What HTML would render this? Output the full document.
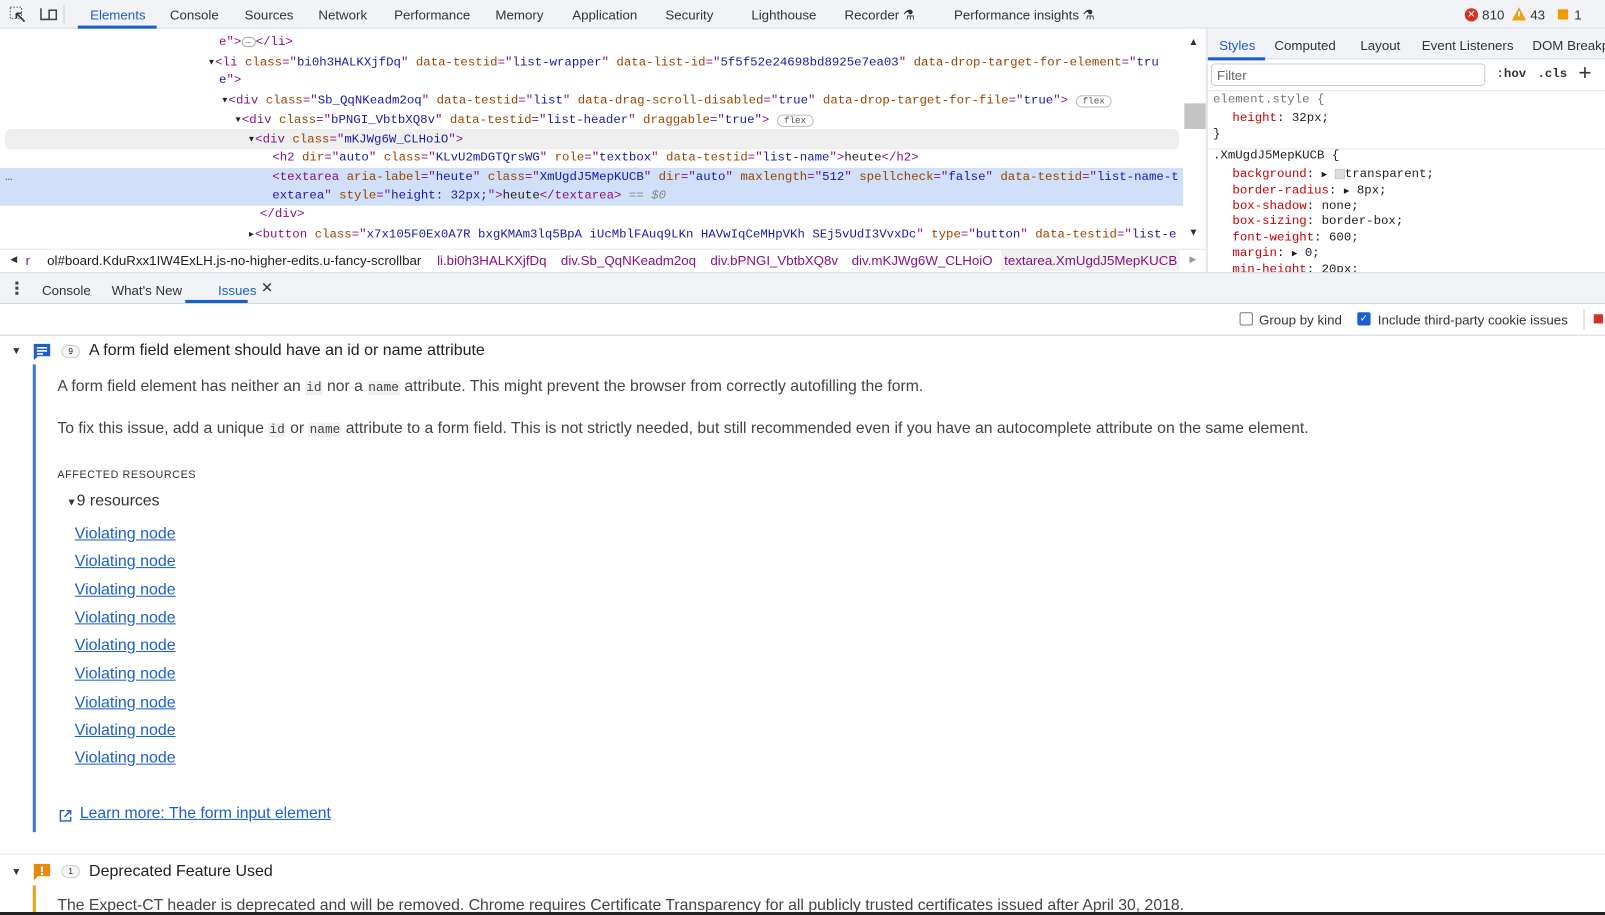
<!DOCTYPE html>
<html><head><meta charset="utf-8"><style>
*{box-sizing:border-box;margin:0;padding:0}
body{width:1605px;height:915px;overflow:hidden;background:#fff;font-family:"Liberation Sans",sans-serif;color:#1f1f1f;position:relative}
#w{position:absolute;left:0;top:0;width:1568px;height:894px;overflow:hidden;transform:scale(1.02360);transform-origin:0 0}
.abs{position:absolute;white-space:nowrap}
.mono{font-family:"Liberation Mono",monospace;font-size:12.1px}
.tg{color:#881280}.an{color:#994500}.av{color:#1a1aa6}
.ui{font-size:13px;color:#333}
.lk{color:#1a5fd0;text-decoration:underline;font-size:15.6px}
code{font-family:"Liberation Mono",monospace;font-size:12.5px;background:#f1f1f1;padding:0 1px}
.rp{color:#c80000}
.p{font-size:15.4px;color:#444}
</style></head><body><div id="w">
<!-- top toolbar -->
<div class="abs" style="left:0;top:0;width:1568px;height:28px;background:#f1f3f6;border-bottom:1px solid #d6dbe2"></div>
<svg class="abs" style="left:9px;top:6px" width="18" height="16"><rect x="1" y="1" width="11" height="11" fill="none" stroke="#555" stroke-dasharray="1.5 1.5"/><path d="M7 7 L15 15 M7 7 L7 12 M7 7 L12 7" stroke="#333" stroke-width="1.6" fill="none"/></svg>
<svg class="abs" style="left:38px;top:6px" width="20" height="16"><path d="M2 2 V13 H10 M2 13 H8" stroke="#444" stroke-width="1.5" fill="none"/><rect x="10" y="4" width="7" height="9" fill="none" stroke="#444" stroke-width="1.5"/></svg>
<div class="abs" style="left:62px;top:5px;width:1px;height:18px;background:#ccc"></div>
<div class="abs ui" style="left:88px;top:7px;color:#1a5fd0">Elements</div>
<div class="abs" style="left:76px;top:25px;width:77px;height:3px;background:#1a5fd0"></div>
<div class="abs ui" style="left:166px;top:7px">Console</div>
<div class="abs ui" style="left:239px;top:7px">Sources</div>
<div class="abs ui" style="left:311px;top:7px">Network</div>
<div class="abs ui" style="left:385px;top:7px">Performance</div>
<div class="abs ui" style="left:484px;top:7px">Memory</div>
<div class="abs ui" style="left:559px;top:7px">Application</div>
<div class="abs ui" style="left:650px;top:7px">Security</div>
<div class="abs ui" style="left:734px;top:7px">Lighthouse</div>
<div class="abs ui" style="left:825px;top:7px">Recorder ⚗</div>
<div class="abs ui" style="left:932px;top:7px">Performance insights ⚗</div>
<div class="abs" style="left:1431px;top:8px;width:13px;height:13px;border-radius:50%;background:#d93025;color:#fff;font-size:10px;text-align:center;line-height:13px">✕</div>
<div class="abs ui" style="left:1448px;top:7px">810</div>
<svg class="abs" style="left:1477px;top:7px" width="14" height="13"><path d="M7 0 L14 13 H0 Z" fill="#e8a317"/><rect x="6.2" y="4" width="1.6" height="5" fill="#fff"/></svg>
<div class="abs ui" style="left:1495px;top:7px">43</div>
<div class="abs" style="left:1522px;top:9px;width:10px;height:10px;background:#f29900;border-radius:1px"></div>
<div class="abs ui" style="left:1538px;top:7px">1</div>

<!-- elements panel -->
<div class="abs" style="left:5px;top:126px;width:1147px;height:20px;background:#efefef;border-radius:6px"></div>
<div class="abs" style="left:0;top:164px;width:1156px;height:37px;background:#cfe0f8"></div>
<div class="abs mono" style="left:5px;top:166px;color:#555">…</div>
<div class="abs mono" style="left:214px;top:34px"><span class="tg">e"&gt;</span><span style="display:inline-block;width:14px;height:10px;border:1px solid #aaa;border-radius:5px;font-size:8px;line-height:7px;text-align:center;vertical-align:middle">…</span><span class="tg">&lt;/li&gt;</span></div>
<div class="abs mono" style="left:203px;top:53px">▾<span class="tg">&lt;li </span><span class="an">class</span><span class="tg">="</span><span class="av">bi0h3HALKXjfDq</span><span class="tg">" </span><span class="an">data-testid</span><span class="tg">="</span><span class="av">list-wrapper</span><span class="tg">" </span><span class="an">data-list-id</span><span class="tg">="</span><span class="av">5f5f52e24698bd8925e7ea03</span><span class="tg">" </span><span class="an">data-drop-target-for-element</span><span class="tg">="</span><span class="av">tru</span></div>
<div class="abs mono" style="left:214px;top:71px"><span class="av">e</span><span class="tg">"&gt;</span></div>
<div class="abs mono" style="left:216px;top:90px">▾<span class="tg">&lt;div </span><span class="an">class</span><span class="tg">="</span><span class="av">Sb_QqNKeadm2oq</span><span class="tg">" </span><span class="an">data-testid</span><span class="tg">="</span><span class="av">list</span><span class="tg">" </span><span class="an">data-drag-scroll-disabled</span><span class="tg">="</span><span class="av">true</span><span class="tg">" </span><span class="an">data-drop-target-for-file</span><span class="tg">="</span><span class="av">true</span><span class="tg">"&gt;</span> <span style="font-size:9px;border:1px solid #bbb;border-radius:8px;padding:0 6px;color:#555">flex</span></div>
<div class="abs mono" style="left:229px;top:109px">▾<span class="tg">&lt;div </span><span class="an">class</span><span class="tg">="</span><span class="av">bPNGI_VbtbXQ8v</span><span class="tg">" </span><span class="an">data-testid</span><span class="tg">="</span><span class="av">list-header</span><span class="tg">" </span><span class="an">draggable</span><span class="tg">="</span><span class="av">true</span><span class="tg">"&gt;</span> <span style="font-size:9px;border:1px solid #bbb;border-radius:8px;padding:0 6px;color:#555">flex</span></div>
<div class="abs mono" style="left:242px;top:128px">▾<span class="tg">&lt;div </span><span class="an">class</span><span class="tg">="</span><span class="av">mKJWg6W_CLHoiO</span><span class="tg">"&gt;</span></div>
<div class="abs mono" style="left:266px;top:147px"><span class="tg">&lt;h2 </span><span class="an">dir</span><span class="tg">="</span><span class="av">auto</span><span class="tg">" </span><span class="an">class</span><span class="tg">="</span><span class="av">KLvU2mDGTQrsWG</span><span class="tg">" </span><span class="an">role</span><span class="tg">="</span><span class="av">textbox</span><span class="tg">" </span><span class="an">data-testid</span><span class="tg">="</span><span class="av">list-name</span><span class="tg">"&gt;</span>heute<span class="tg">&lt;/h2&gt;</span></div>
<div class="abs mono" style="left:266px;top:166px"><span class="tg">&lt;textarea </span><span class="an">aria-label</span><span class="tg">="</span><span class="av">heute</span><span class="tg">" </span><span class="an">class</span><span class="tg">="</span><span class="av">XmUgdJ5MepKUCB</span><span class="tg">" </span><span class="an">dir</span><span class="tg">="</span><span class="av">auto</span><span class="tg">" </span><span class="an">maxlength</span><span class="tg">="</span><span class="av">512</span><span class="tg">" </span><span class="an">spellcheck</span><span class="tg">="</span><span class="av">false</span><span class="tg">" </span><span class="an">data-testid</span><span class="tg">="</span><span class="av">list-name-t</span></div>
<div class="abs mono" style="left:266px;top:184px"><span class="av">extarea</span><span class="tg">" </span><span class="an">style</span><span class="tg">="</span><span class="av">height: 32px;</span><span class="tg">"&gt;</span>heute<span class="tg">&lt;/textarea&gt;</span> <span style="color:#888;font-style:italic">== $0</span></div>
<div class="abs mono" style="left:254px;top:202px"><span class="tg">&lt;/div&gt;</span></div>
<div class="abs mono" style="left:242px;top:221px">▸<span class="tg">&lt;button </span><span class="an">class</span><span class="tg">="</span><span class="av">x7x105F0Ex0A7R bxgKMAm3lq5BpA iUcMblFAuq9LKn HAVwIqCeMHpVKh SEj5vUdI3VvxDc</span><span class="tg">" </span><span class="an">type</span><span class="tg">="</span><span class="av">button</span><span class="tg">" </span><span class="an">data-testid</span><span class="tg">="</span><span class="av">list-e</span></div>
<!-- scrollbar -->
<div class="abs" style="left:1156px;top:28px;width:22px;height:215px;background:#fff"></div>
<div class="abs" style="left:1161px;top:36px;font-size:10px;color:#333">▲</div>
<div class="abs" style="left:1157px;top:101px;width:21px;height:25px;background:#c4c4c4"></div>
<div class="abs" style="left:1161px;top:222px;font-size:10px;color:#333">▼</div>
<!-- breadcrumb -->
<div class="abs" style="left:0;top:243px;width:1180px;height:23px;background:#fff;border-top:1px solid #e3e6ea"></div>
<div class="abs" style="left:978px;top:244px;width:174px;height:21px;background:#f1f1f1"></div>
<div class="abs" style="left:10px;top:248px;font-size:9px;color:#333">◀</div>
<div class="abs ui" style="left:25px;top:247px;color:#881280">r</div>
<div class="abs ui" style="left:46px;top:247px;color:#1f1f1f">ol#board.KduRxx1IW4ExLH.js-no-higher-edits.u-fancy-scrollbar</div>
<div class="abs ui" style="left:427px;top:247px;color:#881280">li.bi0h3HALKXjfDq</div>
<div class="abs ui" style="left:548px;top:247px;color:#881280">div.Sb_QqNKeadm2oq</div>
<div class="abs ui" style="left:694px;top:247px;color:#881280">div.bPNGI_VbtbXQ8v</div>
<div class="abs ui" style="left:832px;top:247px;color:#881280">div.mKJWg6W_CLHoiO</div>
<div class="abs ui" style="left:981px;top:247px;color:#881280">textarea.XmUgdJ5MepKUCB</div>
<div class="abs" style="left:1162px;top:248px;font-size:9px;color:#999">▶</div>
<!-- styles pane -->
<div class="abs" style="left:1178px;top:28px;width:2px;height:238px;background:#e3e6ea"></div>
<div class="abs" style="left:1180px;top:28px;width:425px;height:30px;background:#f1f3f6;border-bottom:1px solid #d6dbe2"></div>
<div class="abs ui" style="left:1191px;top:37px;color:#1a5fd0">Styles</div>
<div class="abs" style="left:1180px;top:56px;width:56px;height:3px;background:#1a5fd0"></div>
<div class="abs ui" style="left:1245px;top:37px">Computed</div>
<div class="abs ui" style="left:1329px;top:37px">Layout</div>
<div class="abs ui" style="left:1389px;top:37px">Event Listeners</div>
<div class="abs ui" style="left:1497px;top:37px">DOM Breakp</div>
<div class="abs" style="left:1183px;top:62px;width:268px;height:22px;border:1px solid #ccc;border-radius:4px"></div>
<div class="abs ui" style="left:1189px;top:66px;color:#666">Filter</div>
<div class="abs mono" style="left:1462px;top:65px;font-weight:bold;color:#333">:hov</div>
<div class="abs mono" style="left:1502px;top:65px;font-weight:bold;color:#333">.cls</div>
<div class="abs" style="left:1542px;top:58px;font-size:22px;color:#333">+</div>
<div class="abs" style="left:1180px;top:88px;width:425px;height:1px;background:#e3e6ea"></div>
<div class="abs mono" style="left:1185px;top:90px;color:#777">element.style {</div>
<div class="abs mono" style="left:1204px;top:108px"><span class="rp">height</span>: 32px;</div>
<div class="abs mono" style="left:1185px;top:124px">}</div>
<div class="abs" style="left:1180px;top:145px;width:425px;height:1px;background:#e3e6ea"></div>
<div class="abs mono" style="left:1185px;top:145px">.XmUgdJ5MepKUCB {</div>
<div class="abs mono" style="left:1204px;top:163px"><span class="rp">background</span>: <span style="font-size:9px">▶</span> <span style="display:inline-block;width:10px;height:10px;background:#ddd;border:1px solid #ccc;vertical-align:middle"></span>transparent;</div>
<div class="abs mono" style="left:1204px;top:179px"><span class="rp">border-radius</span>: <span style="font-size:9px">▶</span> 8px;</div>
<div class="abs mono" style="left:1204px;top:194px"><span class="rp">box-shadow</span>: none;</div>
<div class="abs mono" style="left:1204px;top:209px"><span class="rp">box-sizing</span>: border-box;</div>
<div class="abs mono" style="left:1204px;top:225px"><span class="rp">font-weight</span>: 600;</div>
<div class="abs mono" style="left:1204px;top:240px"><span class="rp">margin</span>: <span style="font-size:9px">▶</span> 0;</div>
<div class="abs" style="left:1180px;top:256px;width:425px;height:10px;overflow:hidden"><div class="mono" style="margin-left:24px;margin-top:0px"><span class="rp">min-height</span>: 20px;</div></div>
<!-- drawer -->
<div class="abs" style="left:0;top:266px;width:1605px;height:31px;background:#f1f3f6;border-top:1px solid #d6dbe2;border-bottom:1px solid #d6dbe2"></div>
<div class="abs" style="left:15px;top:275px;width:3px;height:3px;background:#444;box-shadow:0 5px 0 #444,0 10px 0 #444"></div>
<div class="abs ui" style="left:41px;top:276px">Console</div>
<div class="abs ui" style="left:109px;top:276px">What's New</div>
<div class="abs ui" style="left:213px;top:276px;color:#1a5fd0">Issues</div>
<div class="abs" style="left:255px;top:273px;font-size:14px;color:#333">✕</div>
<div class="abs" style="left:181px;top:293px;width:61px;height:3px;background:#1a5fd0"></div>
<!-- issues toolbar -->
<div class="abs" style="left:0;top:327px;width:1605px;height:1px;background:#d6dbe2"></div>
<div class="abs" style="left:1211px;top:305px;width:13px;height:13px;border:1px solid #777;border-radius:2px"></div>
<div class="abs ui" style="left:1230px;top:305px">Group by kind</div>
<div class="abs" style="left:1326px;top:305px;width:13px;height:13px;background:#1a5fd0;border-radius:2px;color:#fff;font-size:10px;line-height:13px;text-align:center">✓</div>
<div class="abs ui" style="left:1346px;top:305px">Include third-party cookie issues</div>
<div class="abs" style="left:1547px;top:302px;width:1px;height:20px;background:#ccc"></div>
<div class="abs" style="left:1557px;top:307px;width:9px;height:9px;background:#d93025"></div>
<!-- issue 1 -->
<div class="abs" style="left:11px;top:338px;font-size:10px;color:#333">▼</div>
<svg class="abs" style="left:32px;top:335px" width="18" height="18"><path d="M1 1 H17 V13 H5 L1 17 Z" fill="#1a5fd0"/><rect x="4" y="4" width="10" height="1.6" fill="#fff"/><rect x="4" y="7" width="10" height="1.6" fill="#fff"/><rect x="4" y="10" width="6" height="1.6" fill="#fff"/></svg>
<div class="abs" style="left:60px;top:337px;width:18px;height:13px;border:1px solid #ccc;border-radius:7px;font-size:8px;text-align:center;line-height:11px;background:#f5f5f5">9</div>
<div class="abs" style="left:87px;top:334px;font-size:15.6px">A form field element should have an id or name attribute</div>
<div class="abs" style="left:32px;top:356px;width:3px;height:457px;background:#3d78cc"></div>
<div class="abs p" style="left:56px;top:369px">A form field element has neither an <code>id</code> nor a <code>name</code> attribute. This might prevent the browser from correctly autofilling the form.</div>
<div class="abs p" style="left:56px;top:410px">To fix this issue, add a unique <code>id</code> or <code>name</code> attribute to a form field. This is not strictly needed, but still recommended even if you have an autocomplete attribute on the same element.</div>
<div class="abs" style="left:56px;top:458px;font-size:10.5px;letter-spacing:0.6px;color:#333">AFFECTED RESOURCES</div>
<div class="abs" style="left:65px;top:481px;font-size:15.5px;color:#333"><span style="font-size:10px">▼</span>9 resources</div>
<div class="abs lk" style="left:73px;top:513px">Violating node</div>
<div class="abs lk" style="left:73px;top:540px">Violating node</div>
<div class="abs lk" style="left:73px;top:568px">Violating node</div>
<div class="abs lk" style="left:73px;top:595px">Violating node</div>
<div class="abs lk" style="left:73px;top:622px">Violating node</div>
<div class="abs lk" style="left:73px;top:650px">Violating node</div>
<div class="abs lk" style="left:73px;top:678px">Violating node</div>
<div class="abs lk" style="left:73px;top:705px">Violating node</div>
<div class="abs lk" style="left:73px;top:732px">Violating node</div>
<svg class="abs" style="left:57px;top:790px" width="14" height="14"><path d="M6 2 H2 V12 H12 V8 M8 2 H12 V6 M12 2 L6 8" stroke="#1a5fd0" stroke-width="1.4" fill="none"/></svg>
<div class="abs lk" style="left:78px;top:786px;font-size:15.4px">Learn more: The form input element</div>
<div class="abs" style="left:0;top:834px;width:1605px;height:1px;background:#e3e6ea"></div>
<!-- issue 2 -->
<div class="abs" style="left:11px;top:847px;font-size:10px;color:#333">▼</div>
<svg class="abs" style="left:32px;top:843px" width="18" height="18"><path d="M1 1 H17 V13 H5 L1 17 Z" fill="#e8890c"/><rect x="8" y="3.5" width="2" height="5.5" fill="#fff"/><rect x="8" y="10" width="2" height="2" fill="#fff"/></svg>
<div class="abs" style="left:60px;top:845px;width:18px;height:13px;border:1px solid #ccc;border-radius:7px;font-size:8px;text-align:center;line-height:11px;background:#f5f5f5">1</div>
<div class="abs" style="left:87px;top:843px;font-size:15.6px">Deprecated Feature Used</div>
<div class="abs" style="left:32px;top:865px;width:3px;height:50px;background:#e8a317"></div>
<div class="abs p" style="left:56px;top:876px">The Expect-CT header is deprecated and will be removed. Chrome requires Certificate Transparency for all publicly trusted certificates issued after April 30, 2018.</div>
</div>
<div style="position:absolute;left:0;bottom:0;width:1605px;height:3px;background:#222"></div>
</body></html>
